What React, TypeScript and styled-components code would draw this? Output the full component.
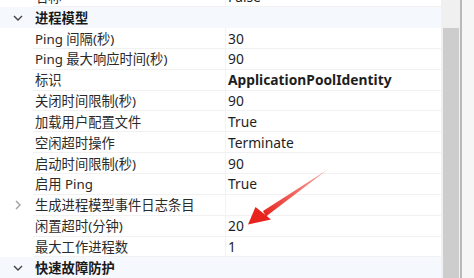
import React from 'react';
import styled, { createGlobalStyle } from 'styled-components';

const GlobalStyle = createGlobalStyle`
  html, body {
    margin: 0;
    padding: 0;
    background: #fff;
  }
  body {
    font-family: "Noto Sans", "Noto Sans CJK SC", sans-serif;
  }
`;

type RowData =
  | { kind: 'category'; name: string }
  | { kind: 'prop'; name: string; value?: string; bold?: boolean; collapsed?: boolean };

const rows: RowData[] = [
  { kind: 'prop', name: '名称', value: 'False' },
  { kind: 'category', name: '进程模型' },
  { kind: 'prop', name: 'Ping 间隔(秒)', value: '30' },
  { kind: 'prop', name: 'Ping 最大响应时间(秒)', value: '90' },
  { kind: 'prop', name: '标识', value: 'ApplicationPoolIdentity', bold: true },
  { kind: 'prop', name: '关闭时间限制(秒)', value: '90' },
  { kind: 'prop', name: '加载用户配置文件', value: 'True' },
  { kind: 'prop', name: '空闲超时操作', value: 'Terminate' },
  { kind: 'prop', name: '启动时间限制(秒)', value: '90' },
  { kind: 'prop', name: '启用 Ping', value: 'True' },
  { kind: 'prop', name: '生成进程模型事件日志条目', collapsed: true },
  { kind: 'prop', name: '闲置超时(分钟)', value: '20' },
  { kind: 'prop', name: '最大工作进程数', value: '1' },
  { kind: 'category', name: '快速故障防护' },
];

const Frame = styled.div`
  position: relative;
  width: 474px;
  height: 278px;
  overflow: hidden;
  display: flex;
  background: #fff;
`;

const Grid = styled.div`
  width: 441px;
  height: 278px;
  overflow: hidden;
`;

const List = styled.div`
  margin-top: -13.6px;
  display: flex;
  flex-direction: column;
`;

const Row = styled.div<{ $category?: boolean }>`
  height: 20.85px;
  display: flex;
  align-items: center;
  background: ${(p) => (p.$category ? '#f5f8fc' : '#fff')};
  font-size: 13.3px;
  color: #1e1e1e;
`;

const Gutter = styled.div`
  width: 33px;
  height: 100%;
  flex: none;
  display: flex;
  align-items: center;
  justify-content: center;
  padding-left: 2px;
  box-sizing: border-box;
`;

const Cells = styled.div<{ $category?: boolean }>`
  flex: 1;
  height: 100%;
  display: flex;
  align-items: center;
  box-sizing: border-box;
  border-bottom: 1px solid ${(p) => (p.$category ? 'transparent' : '#f1f1f1')};
`;

const CategoryName = styled.span`
  padding-left: 2px;
  font-weight: 700;
  color: #1a1a1a;
`;

const NameCell = styled.div`
  width: 193px;
  height: 100%;
  flex: none;
  display: flex;
  align-items: center;
  padding-left: 2px;
  box-sizing: border-box;
  border-right: 1px solid #f3f3f3;
  color: #2a2a2a;
  white-space: nowrap;
`;

const ValueCell = styled.div<{ $bold?: boolean }>`
  flex: 1;
  padding-left: 2px;
  font-size: 13.8px;
  font-weight: ${(p) => (p.$bold ? 700 : 400)};
  color: #1e1e1e;
  white-space: nowrap;
`;

const Scrollbar = styled.div`
  width: 19px;
  height: 278px;
  background: #f0f0f0;
  display: flex;
  flex-direction: column;
  padding: 28px 1px 0 2px;
  box-sizing: border-box;
`;

const Thumb = styled.div`
  flex: 1;
  background: #cdcdcd;
`;

const Divider = styled.div`
  width: 2px;
  background: #b9b9b9;
`;

const SidePanel = styled.div`
  flex: 1;
  background: #f6f6f6;
`;

const ArrowLayer = styled.svg`
  position: absolute;
  left: 0;
  top: 0;
  pointer-events: none;
`;

const ChevronDown = () => (
  <svg width="10" height="6" viewBox="0 0 10 6">
    <path d="M1 1 L5 5 L9 1" fill="none" stroke="#444" strokeWidth="1.4" />
  </svg>
);

const ChevronRight = () => (
  <svg width="6" height="10" viewBox="0 0 6 10">
    <path d="M1 1 L5 5 L1 9" fill="none" stroke="#a0a0a0" strokeWidth="1.4" />
  </svg>
);

export default function App() {
  return (
    <>
      <GlobalStyle />
      <Frame>
        <Grid>
          <List>
            {rows.map((r, i) =>
              r.kind === 'category' ? (
                <Row key={i} $category>
                  <Gutter>
                    <ChevronDown />
                  </Gutter>
                  <Cells $category>
                    <CategoryName>{r.name}</CategoryName>
                  </Cells>
                </Row>
              ) : (
                <Row key={i}>
                  <Gutter>{r.collapsed && <ChevronRight />}</Gutter>
                  <Cells>
                    <NameCell>{r.name}</NameCell>
                    <ValueCell $bold={r.bold}>{r.value}</ValueCell>
                  </Cells>
                </Row>
              )
            )}
          </List>
        </Grid>
        <Scrollbar>
          <Thumb />
        </Scrollbar>
        <Divider />
        <SidePanel />
        <ArrowLayer width="474" height="278" viewBox="0 0 474 278">
          <defs>
            <linearGradient id="tail" x1="327" y1="170" x2="262" y2="214" gradientUnits="userSpaceOnUse">
              <stop offset="0" stopColor="#f04a40" stopOpacity="0.5" />
              <stop offset="1" stopColor="#e8221c" />
            </linearGradient>
          </defs>
          <polygon points="327,170 263,211 266,216.5" fill="url(#tail)" />
          <polygon points="248,224.5 255.5,207 271,219.5" fill="#e8221c" />
        </ArrowLayer>
      </Frame>
    </>
  );
}
